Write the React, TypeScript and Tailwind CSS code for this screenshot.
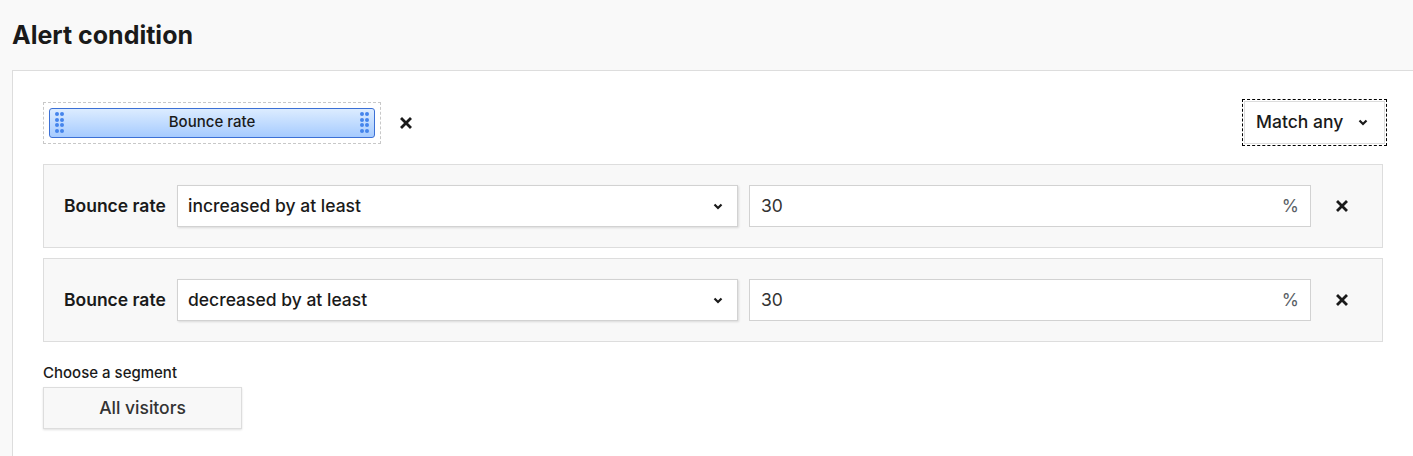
import React from 'react';

const font = { fontFamily: 'Inter, "Noto Sans", sans-serif' };

const Times = () => (
  <svg width="12" height="12" viewBox="0 0 12 12" className="block">
    <path d="M2 2 L10 10 M10 2 L2 10" stroke="#1a1a1a" strokeWidth="2.8" strokeLinecap="square" />
  </svg>
);

const Chevron = () => (
  <svg width="10" height="7" viewBox="0 0 10 7" className="block">
    <path d="M1.5 1.5 L5 5 L8.5 1.5" stroke="#1a1a1a" strokeWidth="2.2" fill="none" />
  </svg>
);

const DragDots = () => (
  <div className="grid grid-cols-2 gap-x-[1px] gap-y-[1.5px]">
    {Array.from({ length: 8 }).map((_, i) => (
      <span key={i} className="block w-[4px] h-[4px] rounded-full bg-[#4585ec]" />
    ))}
  </div>
);

interface RowProps {
  op: string;
}

const ConditionRow: React.FC<RowProps> = ({ op }) => (
  <div className="flex items-center bg-[#f8f8f8] border border-[#dddddd] pl-[20px] py-[20px]">
    <span className="w-[113px] shrink-0 text-[17.5px] font-semibold text-[#1a1a1a]">Bounce rate</span>
    <div className="w-[561px] h-[42px] shrink-0 bg-white border border-[#d2d2d2] shadow-[1px_1px_2px_rgba(0,0,0,0.12)] flex items-center justify-between pl-[10px] pr-[14px]">
      <span className="text-[17.5px] font-medium text-[#1a1a1a]">{op}</span>
      <Chevron />
    </div>
    <div className="ml-[11px] w-[562px] h-[42px] shrink-0 bg-white border border-[#d2d2d2] flex items-center justify-between pl-[11px] pr-[11px]">
      <span className="text-[17.5px] text-[#333333]">30</span>
      <span className="text-[17.5px] text-[#5a5f66]">%</span>
    </div>
    <div className="w-[62px] flex justify-center">
      <Times />
    </div>
  </div>
);

export default function App() {
  return (
    <div className="min-h-[456px] bg-[#f9f9f9] overflow-hidden" style={font}>
      <h2 className="pl-[12px] pt-[19px] text-[25px] leading-[32px] font-bold text-[#1a1a1a]">Alert condition</h2>

      <div className="mt-[19px] ml-[12px] bg-white border-l border-t border-[#dddddd] pl-[30px] pr-[30px] pt-[30px] pb-[30px]">
        {/* Top bar */}
        <div className="flex items-center justify-between h-[43px]">
          <div className="flex items-center">
            <div className="border border-dashed border-[#c8c8c8] p-[5px]">
              <div className="w-[326px] h-[30px] rounded-[3px] border border-[#3b70d6] bg-gradient-to-b from-[#dcecff] to-[#a6cbff] flex items-center justify-between px-[5px]">
                <DragDots />
                <span className="text-[15px] font-medium text-[#1a1a1a]">Bounce rate</span>
                <DragDots />
              </div>
            </div>
            <div className="ml-[19px]">
              <Times />
            </div>
          </div>
          <div className="mr-[-2px] outline outline-1 outline-dashed outline-black outline-offset-[1px]">
            <div className="w-[141px] h-[43px] bg-white border border-[#dcdcdc] flex items-center pl-[11px] pr-[16px] justify-between">
              <span className="text-[17.5px] font-medium text-[#1a1a1a]">Match any</span>
              <Chevron />
            </div>
          </div>
        </div>

        {/* Conditions */}
        <div className="mt-[20px] flex flex-col gap-[10px]">
          <ConditionRow op="increased by at least" />
          <ConditionRow op="decreased by at least" />
        </div>

        {/* Segment */}
        <div className="mt-[21px] text-[15px] font-medium leading-[20px] text-[#1a1a1a]">Choose a segment</div>
        <div className="mt-[4px] w-[199px] h-[42px] bg-[#f8f8f8] border border-[#dddddd] shadow-[0_1px_2px_rgba(0,0,0,0.12)] flex items-center justify-center">
          <span className="text-[17.5px] font-medium text-[#333333]">All visitors</span>
        </div>
      </div>
    </div>
  );
}
